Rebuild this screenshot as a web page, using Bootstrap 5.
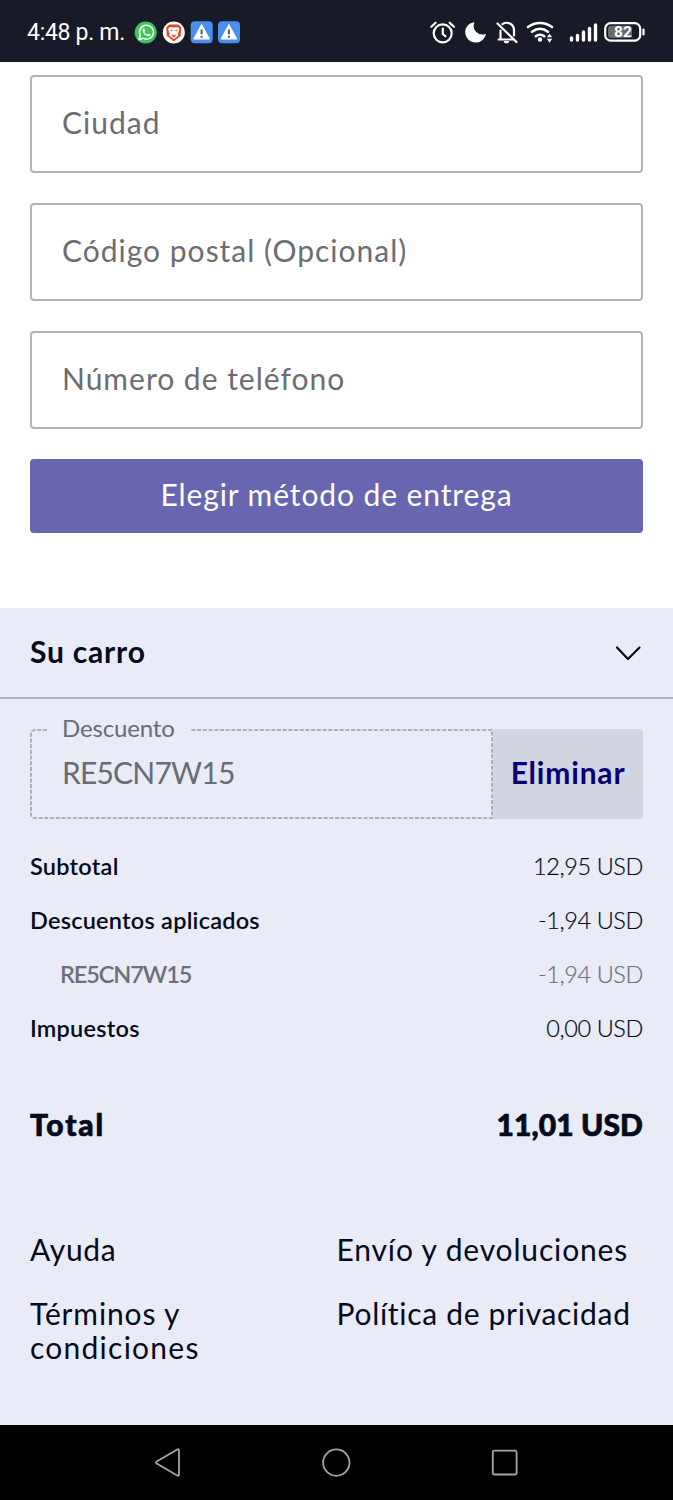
<!DOCTYPE html>
<html lang="es">
<head>
<meta charset="utf-8">
<meta name="viewport" content="width=device-width, initial-scale=1">
<title>Su carro</title>
<link href="https://cdn.jsdelivr.net/npm/bootstrap@5.3.0/dist/css/bootstrap.min.css" rel="stylesheet">
<style>
body{font-family:Lato,"Open Sans",sans-serif;font-size:30px;line-height:34px;color:#050a1c;background:#fff;height:1500px;overflow:hidden}
svg{display:block;flex:none}
.status{height:62px;background:#181b27;padding:2px 27px 0 27px}
.clock{font:23px/30px Roboto,sans-serif;letter-spacing:-.3px;width:107px;white-space:nowrap;padding-top:2px}
.form-area{height:546px;padding:13px 30px 0}
.field.form-control{height:98px;border:2px solid #b0b5ba;border-radius:4px;padding:0 30px 4px;font-size:30px;letter-spacing:1px;color:#6b6d71;background:#fff;box-shadow:none;margin-bottom:30px}
.field::placeholder{color:#6b6d71;opacity:1}
.btn-go{height:74px;background:#6866b1!important;border:0;border-radius:4px;color:#fff!important;font-size:30px;line-height:34px;padding:0 0 4px;letter-spacing:.9px}
.cart{height:817px;background:#e9ebf7}
.cart-head{height:91px;padding:0 30px;border-bottom:2px solid #b2b4c1}
.cart-head .g{padding-bottom:3px;letter-spacing:.8px}
.strong6{font-weight:600}
.cart-head .strong6{font-weight:700}
.promo{margin:30px 30px 0;height:90px}
.code{margin:0;width:463px;position:relative;color:#696b77;padding:26px 30px 0 32px;letter-spacing:-.8px}
.code .frame{position:absolute;inset:0;z-index:0}
.code legend{position:absolute;left:32px;top:-16px;width:auto;margin:0;font-size:24px;line-height:30px;float:none;letter-spacing:-.15px}
.btn-del{width:150px;border:0;border-radius:0 4px 4px 0;background:#d1d6e1!important;color:#060074!important;font-size:30px;line-height:34px;padding:0 0 4px;letter-spacing:.8px}
.sums{padding:20px 30px 0;font-size:23.5px;letter-spacing:.24px}
.sums .line{height:54px}
.sums .amt{font-weight:300;letter-spacing:-.4px;-webkit-text-stroke:.2px currentColor}
.sums .sub{color:#6d6f7a;padding-left:30px}
.sums .sub .strong6{letter-spacing:-1.1px}
.total{padding:0 30px;margin-top:42px;height:54px;font-weight:900;-webkit-text-stroke:.7px currentColor}
.total .g:first-child{letter-spacing:1.8px}
.total .g:last-child{letter-spacing:.1px}
.foot{padding:81px 30px 0;letter-spacing:.85px}
.foot .cell{padding:0;margin-bottom:30px;white-space:nowrap}
.foot .tight{letter-spacing:.7px}
.foot .loose{letter-spacing:1.25px}
.softkeys{height:75px;background:#000}
.g{display:inline-block;white-space:nowrap}
</style>
</head>
<body>
<header class="status d-flex align-items-center">
  <div class="clock text-white">4:48 p. m.</div>
  <svg width="112" height="24" viewBox="134 20 112 24">
    <circle cx="145.700" cy="32.500" r="11" fill="#3fc65b"/>
    <path d="M139 39.500l1.200-4.200a7 7 0 1 1 2.700 2.900z" fill="none" stroke="#fff" stroke-width="1.500" stroke-linejoin="round"/>
    <path d="M143 28.500l1.300 0 .9 2.200-.9 1.200c.8 1.400 1.600 2.100 3 2.800l1.100-1.200 2.100 1-.2 1.300c-3.800 2.200-9.500-3.800-7.300-7.300z" fill="#fff"/>
    <circle cx="173.800" cy="32.500" r="11" fill="#fff"/>
    <path d="M169.300 24.500h9l3 2.800-.5 8.500-7 5.700-7-5.700-.5-8.500z" fill="#dc4c24"/>
    <path d="M169.800 27l4 .5 4-.5 1.700 2-1.500 4.700.3 1.800-4.500 3.500-4.500-3.500.3-1.800-1.500-4.700z" fill="#fff"/>
    <path d="M170.300 29.500l2.600.9-1.800 1zM177.300 29.500l-2.600.9 1.800 1zM171.800 34l2 1.500 2-1.500-.4 2.200-1.600 1.300-1.600-1.300z" fill="#dc4c24"/>
    <g id="warn"><rect x="190.700" y="21.200" width="22" height="22" rx="4" fill="#4c8eee"/><path d="M201.600 24.800l7.600 14h-15.200z" fill="#fff" stroke="#fff" stroke-width="1.200" stroke-linejoin="round"/><path d="M201.600 29.500v4.800M201.600 35.700v2" stroke="#4a587a" stroke-width="2"/></g>
    <use href="#warn" x="27.300"/>
  </svg>
  <svg class="ms-auto" width="218" height="28" viewBox="428 16.500 218 28">
    <g fill="none" stroke="#fff" stroke-width="2.200" stroke-linecap="round">
      <circle cx="442.700" cy="31.800" r="9"/><path d="M442.800 27v5.500l2.600 2.300M431.300 25.200l4.300-4M454 25.200l-4.300-4"/>
      <path d="M502.500 22.500c5.500-3.200 11.500.5 11.500 6v5.500M500.500 29v8.200M498.600 38h14.800M497.500 22l19 18.500" stroke-width="2.200"/>
      <path d="M528 25.500c7-5.500 17-5.500 24 0M532 30.200c5-3.800 11-3.800 16 0M535.800 34.800c2.500-2.200 6-2.200 8.500 0" stroke-width="2.500"/>
    </g>
    <path d="M474.500 20.700a8.700 8.700 0 0 0 11.500 11.500c-1 5-5 8.800-10.200 8.800-6 0-10.600-4.700-10.600-10.500 0-5 3.800-9.200 9.300-9.800zM503.800 39.500h5.400a2.700 2.300 0 0 1-5.400 0z" fill="#fff"/>
    <circle cx="540" cy="38" r="2.200" fill="#fff"/><path d="M546.800 35.800h5.400l-2.700-3.600zM546.800 37.200h5.400l-2.700 4z" fill="#fff"/>
    <path d="M571.500 38.500v-2M577.500 38.500v-4.500M583.500 38.500v-8M589.500 38.500v-11.500M595.500 38.500v-15" stroke="#fff" stroke-width="3.400" stroke-linecap="round"/>
    <rect x="605.200" y="21.600" width="35" height="17.600" rx="5.500" fill="none" stroke="#fff" stroke-width="2.200"/>
    <rect x="608" y="24.200" width="24" height="12.400" rx="3" fill="#666972"/>
    <path d="M643.500 28v5" stroke="#fff" stroke-width="2.200" stroke-linecap="round"/>
    <text x="623" y="35.700" text-anchor="middle" font-family="Roboto" font-weight="700" font-size="15.500" fill="#fff">82</text>
  </svg>
</header>
<main>
  <form class="form-area">
    <input class="form-control field" placeholder="Ciudad">
    <input class="form-control field" placeholder="Código postal (Opcional)">
    <input class="form-control field" placeholder="Número de teléfono">
    <button type="button" class="btn btn-go w-100">Elegir método de entrega</button>
  </form>
  <section class="cart">
    <div class="cart-head d-flex align-items-center justify-content-between">
      <span class="g strong6">Su carro</span>
      <svg width="30" height="20" viewBox="0 0 30 20"><path d="M4 4.500L15 16 26.500 4.500" fill="none" stroke="#050a1c" stroke-width="2.200" stroke-linecap="round" stroke-linejoin="round"/></svg>
    </div>
    <div class="promo d-flex">
      <fieldset class="code">
        <svg class="frame" width="463" height="90"><path d="M17 1H5Q1 1 1 5V85Q1 89 5 89H462V1H160" fill="none" stroke="#aeb0bb" stroke-width="2" stroke-dasharray="4 1.700"/></svg>
        <legend>Descuento</legend>
        <span class="g">RE5CN7W15</span>
      </fieldset>
      <button type="button" class="btn btn-del fw-bold">Eliminar</button>
    </div>
    <div class="sums">
      <div class="line d-flex justify-content-between align-items-center"><span class="g strong6">Subtotal</span><span class="g amt">12,95 USD</span></div>
      <div class="line d-flex justify-content-between align-items-center"><span class="g strong6">Descuentos aplicados</span><span class="g amt">-1,94 USD</span></div>
      <div class="line sub d-flex justify-content-between align-items-center"><span class="g strong6">RE5CN7W15</span><span class="g amt">-1,94 USD</span></div>
      <div class="line d-flex justify-content-between align-items-center"><span class="g strong6">Impuestos</span><span class="g amt">0,00 USD</span></div>
    </div>
    <div class="total d-flex justify-content-between align-items-center"><span class="g">Total</span><span class="g">11,01 USD</span></div>
    <div class="foot">
      <div class="row g-0">
        <div class="col-6 cell tight">Ayuda</div>
        <div class="col-6 cell">Envío y devoluciones</div>
        <div class="col-6 cell">Términos y<br><span class="loose">condiciones</span></div>
        <div class="col-6 cell tight">Política de privacidad</div>
      </div>
    </div>
  </section>
</main>
<nav class="softkeys">
  <svg width="673" height="75" viewBox="0 1425 673 75" fill="none" stroke="#a3a3a3" stroke-width="1.800" stroke-linejoin="round"><path d="M177.200 1449.500q1.800-.8 1.800 1v24q0 1.800-1.800 1l-20.500-12q-1.500-1 0-2z"/><circle cx="336.300" cy="1462.600" r="13.200"/><rect x="492.800" y="1450.700" width="23.800" height="23.800" rx="1.500"/></svg>
</nav>
<script src="https://cdn.jsdelivr.net/npm/bootstrap@5.3.0/dist/js/bootstrap.bundle.min.js"></script>
</body>
</html>
